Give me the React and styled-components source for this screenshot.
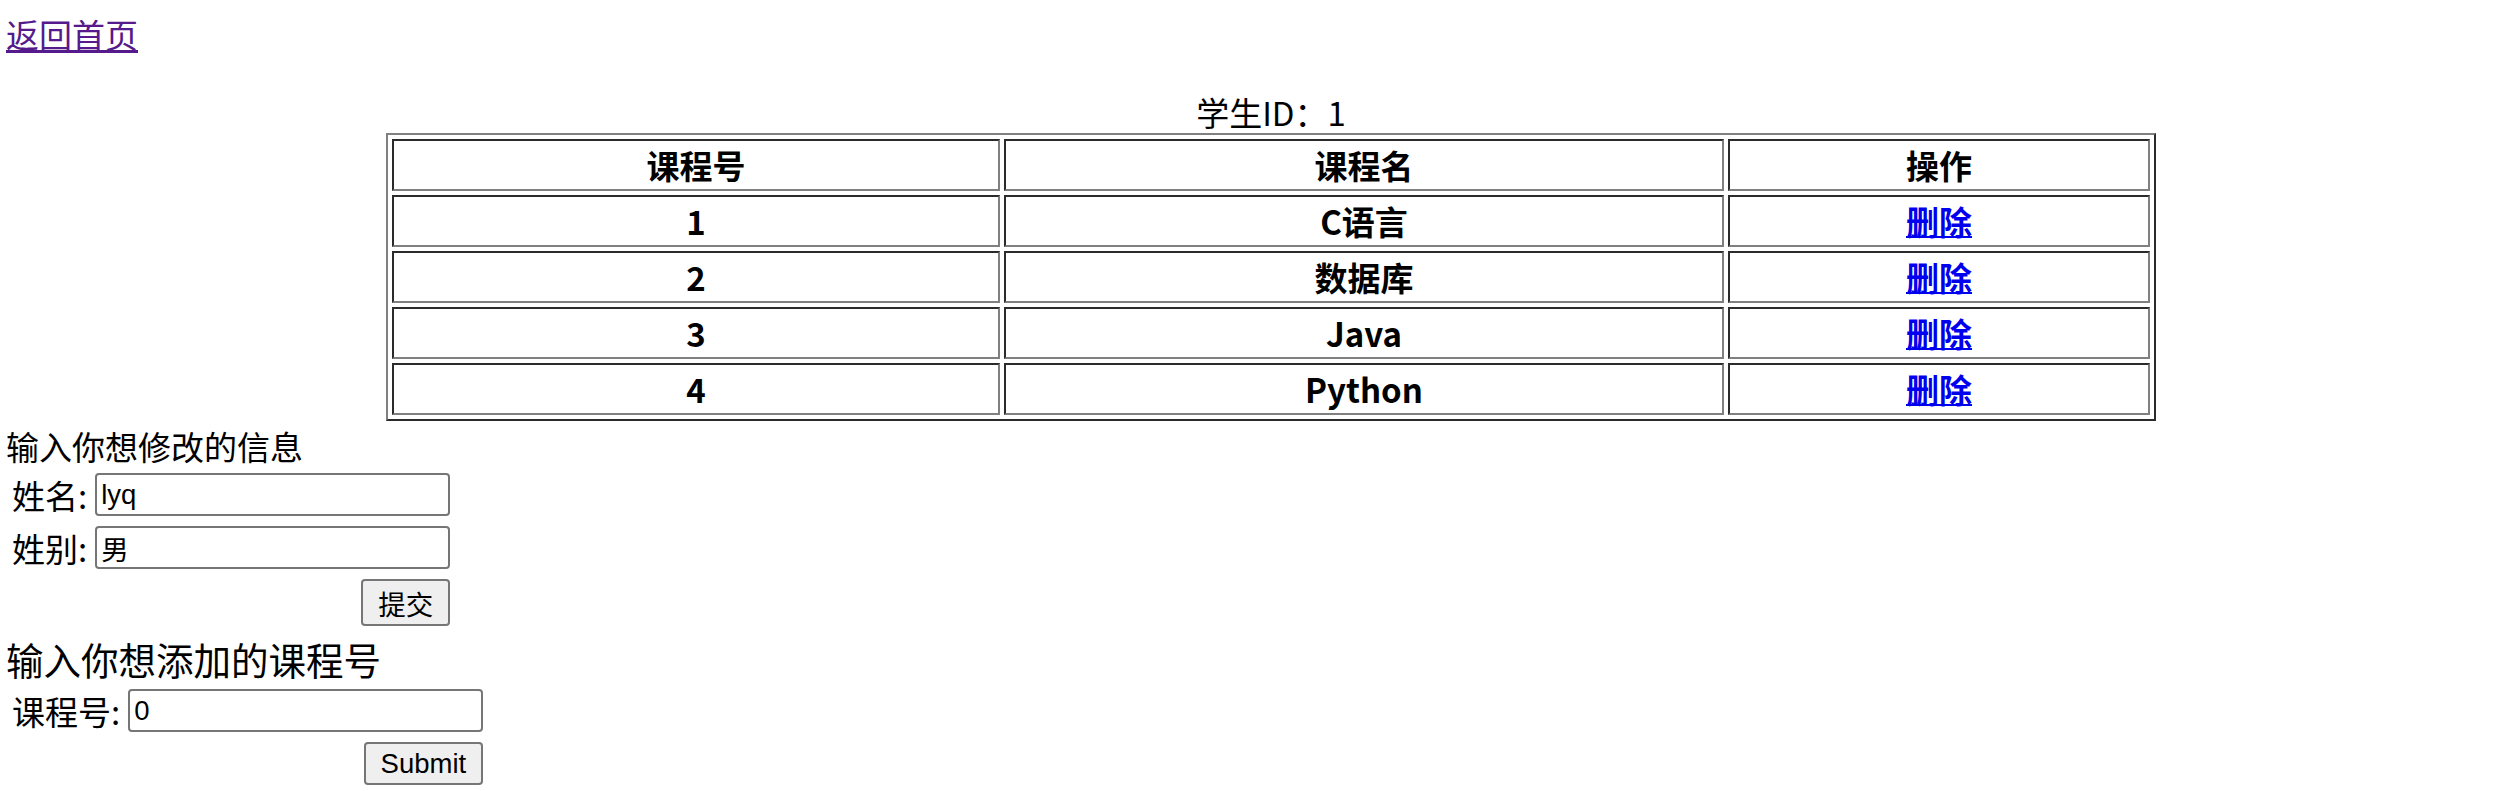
import React from "react";
import styled, { createGlobalStyle } from "styled-components";

const courses = [
  { id: 1, name: "C语言" },
  { id: 2, name: "数据库" },
  { id: 3, name: "Java" },
  { id: 4, name: "Python" },
];

const GlobalStyle = createGlobalStyle`
  body {
    margin: 0;
    padding: 13px 6px 0;
    background: #fff;
    color: #000;
    font-family: "Noto Sans CJK SC", sans-serif;
    font-size: 33px;
    line-height: 42px;
  }
`;

export default function App() {
  return (
    <Page>
      <GlobalStyle />
      <TopLine>
        <HomeLink href="#">返回首页</HomeLink>
      </TopLine>

      <CourseTable>
        <Caption>学生ID：1</Caption>
        <colgroup>
          <col width="608" />
          <col width="720" />
          <col width="422" />
        </colgroup>
        <thead>
          <tr>
            <Cell>课程号</Cell>
            <Cell>课程名</Cell>
            <Cell>操作</Cell>
          </tr>
        </thead>
        <tbody>
          {courses.map((c) => (
            <tr key={c.id}>
              <Cell>{c.id}</Cell>
              <Cell>{c.name}</Cell>
              <Cell>
                <DeleteLink href="#">删除</DeleteLink>
              </Cell>
            </tr>
          ))}
        </tbody>
      </CourseTable>

      <SectionTitle>输入你想修改的信息</SectionTitle>
      <FormGrid>
        <Label>姓名:</Label>
        <Field>
          <TextInput defaultValue="lyq" />
        </Field>
        <Label>姓别:</Label>
        <Field>
          <TextInput defaultValue="男" />
        </Field>
        <Actions>
          <Button $tall>提交</Button>
        </Actions>
      </FormGrid>

      <SectionTitle $large>输入你想添加的课程号</SectionTitle>
      <FormGrid>
        <Label>课程号:</Label>
        <Field>
          <TextInput defaultValue="0" />
        </Field>
        <Actions>
          <Button>Submit</Button>
        </Actions>
      </FormGrid>
    </Page>
  );
}

const Page = styled.div``;

const TopLine = styled.div`
  height: 42px;
`;

const HomeLink = styled.a`
  color: #551a8b;
  text-decoration: underline;
  text-decoration-thickness: 3px;
  text-underline-offset: 2px;
`;

const CourseTable = styled.table`
  margin: 36px 0 0 380px;
  width: 1770px;
  table-layout: fixed;
  border-collapse: separate;
  border-spacing: 4px;
  border: 2px solid;
  border-color: #808080 #2b2b2b #2b2b2b #808080;
`;

const Caption = styled.caption`
  text-align: center;
  line-height: 42px;
`;

const Cell = styled.th`
  padding: 2px;
  height: 44px;
  line-height: 44px;
  font-weight: 700;
  text-align: center;
  border: 2px solid;
  border-color: #2b2b2b #808080 #808080 #2b2b2b;
`;

const DeleteLink = styled.a`
  color: #0000ee;
  text-decoration: underline;
  text-decoration-thickness: 2px;
`;

const SectionTitle = styled.div`
  margin-top: ${(p) => (p.$large ? "2px" : "4px")};
  font-size: ${(p) => (p.$large ? "37.5px" : "33px")};
  line-height: ${(p) => (p.$large ? "49px" : "42px")};
`;

const FormGrid = styled.div`
  display: grid;
  grid-template-columns: auto auto;
  justify-content: start;
  gap: 4px;
  padding: 4px;
`;

const Label = styled.label`
  padding: 2px;
  line-height: 45px;
`;

const Field = styled.div`
  padding: 2px;
  height: 45px;
`;

const Actions = styled.div`
  grid-column: 2;
  justify-self: end;
  padding: 2px;
`;

const TextInput = styled.input`
  display: block;
  box-sizing: border-box;
  width: 355px;
  height: 43px;
  padding: 0 4px;
  border: 2px solid #767676;
  border-radius: 4px;
  font-family: "Liberation Sans", "Noto Sans CJK SC", sans-serif;
  font-size: 27.5px;
  color: #000;
  background: #fff;
  outline: none;
`;

const Button = styled.button`
  display: block;
  box-sizing: border-box;
  height: ${(p) => (p.$tall ? "47px" : "43px")};
  padding: 0 15px;
  border: 2px solid #767676;
  border-radius: 4px;
  background: #efefef;
  color: #000;
  font-family: "Liberation Sans", "Noto Sans CJK SC", sans-serif;
  font-size: 27.5px;
  line-height: normal;
`;
